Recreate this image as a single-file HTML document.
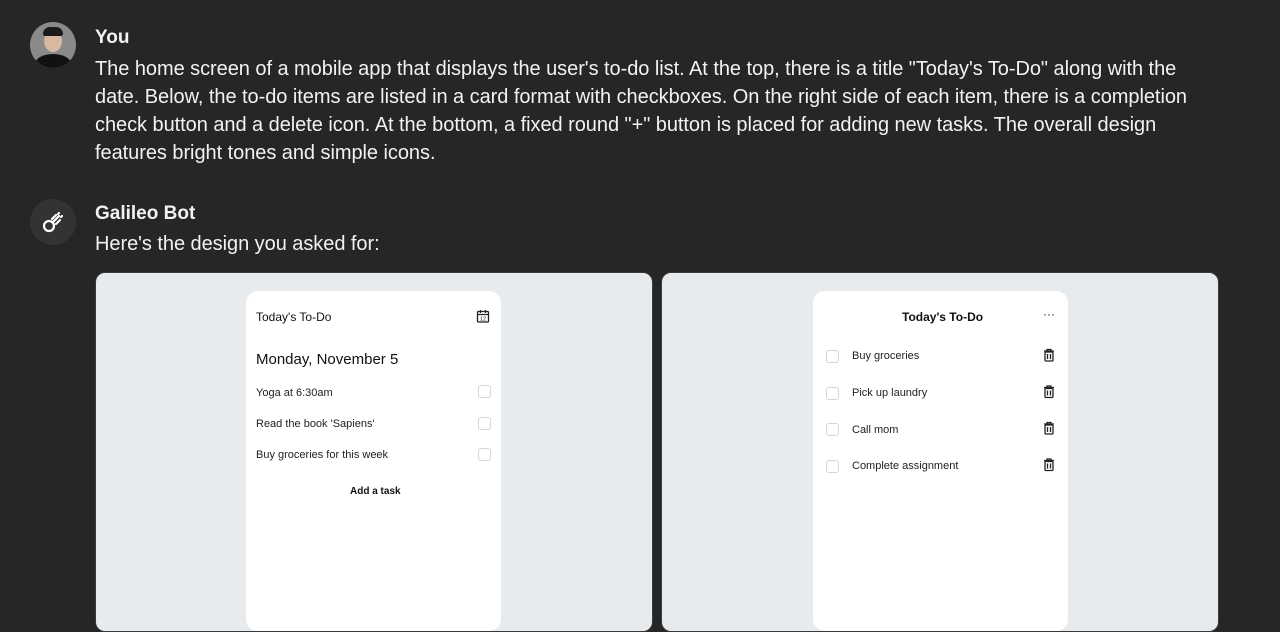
<!DOCTYPE html>
<html><head><style>
*{margin:0;padding:0;box-sizing:border-box}
body{width:1280px;height:616px;overflow:hidden;background:#262626;font-family:"Liberation Sans",sans-serif;color:#f2f2f2;position:relative}
.abs{position:absolute}
.name{font-weight:bold;font-size:19px}
.txt{font-size:20px;line-height:28px;letter-spacing:-0.05px}
.panel{position:absolute;top:272px;height:360px;background:#e8ebee;border-radius:10px;border:1px solid #3a3a3a}
.phone{position:absolute;top:291px;width:255px;height:340px;background:#fff;border-radius:12px;color:#111}
.cb{position:absolute;width:13px;height:13px;border:1px solid #d5d5d5;border-radius:3px}
.t{position:absolute;font-size:11px;color:#222}
</style></head><body>
<div class="abs" style="left:30px;top:22px;width:46px;height:46px;border-radius:50%;background:#8a8a8a;overflow:hidden">
<div class="abs" style="left:14px;top:8px;width:18px;height:22px;border-radius:50%;background:#d8b8a0"></div>
<div class="abs" style="left:13px;top:5px;width:20px;height:9px;border-radius:10px 10px 3px 3px;background:#1a1a1a"></div>
<div class="abs" style="left:5px;top:32px;width:36px;height:20px;border-radius:50% 50% 0 0;background:#111"></div>
</div>
<div class="abs name" style="left:95px;top:27px">You</div>
<div class="abs txt" style="left:95px;top:55px;width:1105px">The home screen of a mobile app that displays the user's to-do list. At the top, there is a title "Today's To-Do" along with the date. Below, the to-do items are listed in a card format with checkboxes. On the right side of each item, there is a completion check button and a delete icon. At the bottom, a fixed round "+" button is placed for adding new tasks. The overall design features bright tones and simple icons.</div>
<div class="abs" style="left:30px;top:199px;width:46px;height:46px;border-radius:50%;background:#333">
<svg width="46" height="46" viewBox="0 0 46 46"><circle cx="19" cy="27" r="5" fill="none" stroke="#fff" stroke-width="2.2"/><path d="M23 23l6-6M22 20l4-4M26 25l4-4M28 15l1-1M31 18l1-1" stroke="#fff" stroke-width="2.2" stroke-linecap="round"/></svg>
</div>
<div class="abs name" style="left:95px;top:203px">Galileo Bot</div>
<div class="abs txt" style="left:95px;top:230px">Here's the design you asked for:</div>
<div class="panel" style="left:95px;width:558px"></div>
<div class="panel" style="left:661px;width:558px"></div>
<div class="phone" style="left:246px">
<div class="t" style="left:10px;top:19px;font-size:12px;color:#111">Today's To-Do</div>
<svg class="abs" style="left:230px;top:18px" width="14" height="14" viewBox="0 0 14 14"><rect x="1.5" y="2.5" width="11" height="10.5" rx="1" fill="none" stroke="#222" stroke-width="1.3"/><path d="M1.5 5.5h11M4.5 1v3M9.5 1v3" stroke="#222" stroke-width="1.3"/><text x="7" y="11.5" font-size="5.5" text-anchor="middle" fill="#222" font-family="Liberation Sans">12</text></svg>
<div class="t" style="left:10px;top:60px;font-size:15px;color:#111">Monday, November 5</div>
<div class="t" style="left:10px;top:96px">Yoga at 6:30am</div><div class="cb" style="left:232px;top:94px"></div>
<div class="t" style="left:10px;top:127px">Read the book 'Sapiens'</div><div class="cb" style="left:232px;top:126px"></div>
<div class="t" style="left:10px;top:158px">Buy groceries for this week</div><div class="cb" style="left:232px;top:157px"></div>
<div class="t" style="left:104px;top:195px;font-size:10px;font-weight:bold;color:#111">Add a task</div>
</div>
<div class="phone" style="left:813px">
<div class="t" style="left:89px;top:19px;font-size:12px;font-weight:bold;color:#111">Today's To-Do</div>
<div class="t" style="left:230px;top:16px;font-size:12px">···</div>
<div class="cb" style="left:13px;top:59px"></div><div class="t" style="left:39px;top:59px">Buy groceries</div>
<div class="cb" style="left:13px;top:96px"></div><div class="t" style="left:39px;top:96px">Pick up laundry</div>
<div class="cb" style="left:13px;top:132px"></div><div class="t" style="left:39px;top:133px">Call mom</div>
<div class="cb" style="left:13px;top:169px"></div><div class="t" style="left:39px;top:169px">Complete assignment</div>
<svg class="abs" style="left:229px;top:57px" width="14" height="160" viewBox="0 0 14 160">
<g id="tr" fill="none" stroke="#222" stroke-width="1.3"><path d="M2 3h10M5 3V1.5h4V3"/><rect x="3" y="4" width="8" height="9" rx="1"/><path d="M5.5 6v5M8.5 6v5"/></g>
<use href="#tr" y="36.5"/><use href="#tr" y="73"/><use href="#tr" y="109.5"/>
</svg>
</div>
</body></html>
